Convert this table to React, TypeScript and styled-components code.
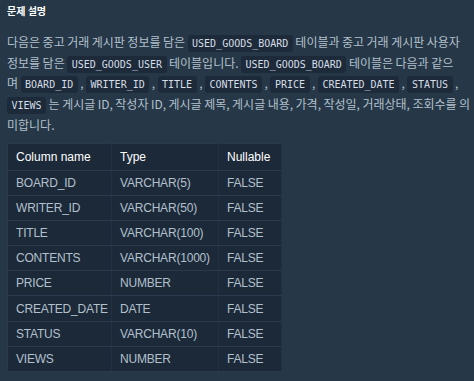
import React from "react";
import styled, { createGlobalStyle } from "styled-components";

const Global = createGlobalStyle`
  html, body {
    margin: 0;
    padding: 0;
    background: #263747;
  }
  body {
    font-family: "Noto Sans CJK KR", "Noto Sans", sans-serif;
  }
`;

const Page = styled.div`
  width: 474px;
  height: 381px;
  box-sizing: border-box;
  padding: 3px 3px 0 7px;
  background: #263747;
  overflow: hidden;
`;

const Heading = styled.h6`
  margin: 0;
  font-size: 10px;
  line-height: 16px;
  font-weight: 700;
  color: #ffffff;
`;

const Paragraph = styled.p`
  margin: 13px 0 0 0;
  font-size: 12px;
  line-height: 20.7px;
  word-spacing: -0.2px;
  color: #b2c0cc;
  word-break: normal;
`;

const Code = styled.code`
  font-family: "DejaVu Sans Mono", monospace;
  font-size: 10px;
  line-height: 10px;
  word-spacing: 0;
  color: #d5dde6;
  background: #1d2a39;
  border-radius: 3px;
  padding: 3px 4.5px;
`;

const Table = styled.table`
  margin-top: 7px;
  border-collapse: collapse;
  table-layout: fixed;
  width: 274px;
  background: #1c2939;
  border: 1px solid #2a3a4c;
  font-family: "Liberation Sans", Arial, sans-serif;
  font-size: 12px;
`;

const Col = styled.col<{ $w: number }>`
  width: ${(p) => p.$w}px;
`;

const HeadCell = styled.th`
  height: 26px;
  padding: 0 0 0 8px;
  text-align: left;
  font-weight: 400;
  white-space: nowrap;
  color: #ffffff;
  border-right: 1px solid #223042;
  border-bottom: 1px solid #2a3a4c;
`;

const Cell = styled.td`
  height: 24.2px;
  padding: 0 0 0 8px;
  white-space: nowrap;
  letter-spacing: -0.2px;
  color: #b2c0cc;
  border-right: 1px solid #223042;
  border-bottom: 1px solid #2a3a4c;
`;

const rows: [string, string][] = [
  ["BOARD_ID", "VARCHAR(5)"],
  ["WRITER_ID", "VARCHAR(50)"],
  ["TITLE", "VARCHAR(100)"],
  ["CONTENTS", "VARCHAR(1000)"],
  ["PRICE", "NUMBER"],
  ["CREATED_DATE", "DATE"],
  ["STATUS", "VARCHAR(10)"],
  ["VIEWS", "NUMBER"],
];

export default function App() {
  return (
    <>
      <Global />
      <Page>
        <Heading>문제 설명</Heading>
        <Paragraph>
          다음은 중고 거래 게시판 정보를 담은 <Code>USED_GOODS_BOARD</Code> 테이블과 중고 거래 게시판 사용자
          정보를 담은 <Code>USED_GOODS_USER</Code> 테이블입니다. <Code>USED_GOODS_BOARD</Code> 테이블은 다음과 같으
          <br />며{" "}
          <Code>BOARD_ID</Code> , <Code>WRITER_ID</Code> , <Code>TITLE</Code> , <Code>CONTENTS</Code> ,{" "}
          <Code>PRICE</Code> , <Code>CREATED_DATE</Code> , <Code>STATUS</Code> , <Code>VIEWS</Code> 는 게시글 ID,
          작성자 ID, 게시글 제목, 게시글 내용, 가격, 작성일, 거래상태, 조회수를 의미합니다.
        </Paragraph>
        <Table>
          <colgroup>
            <Col $w={104} />
            <Col $w={107} />
            <Col $w={63} />
          </colgroup>
          <thead>
            <tr>
              <HeadCell>Column name</HeadCell>
              <HeadCell>Type</HeadCell>
              <HeadCell>Nullable</HeadCell>
            </tr>
          </thead>
          <tbody>
            {rows.map(([name, type]) => (
              <tr key={name}>
                <Cell>{name}</Cell>
                <Cell>{type}</Cell>
                <Cell>FALSE</Cell>
              </tr>
            ))}
          </tbody>
        </Table>
      </Page>
    </>
  );
}
